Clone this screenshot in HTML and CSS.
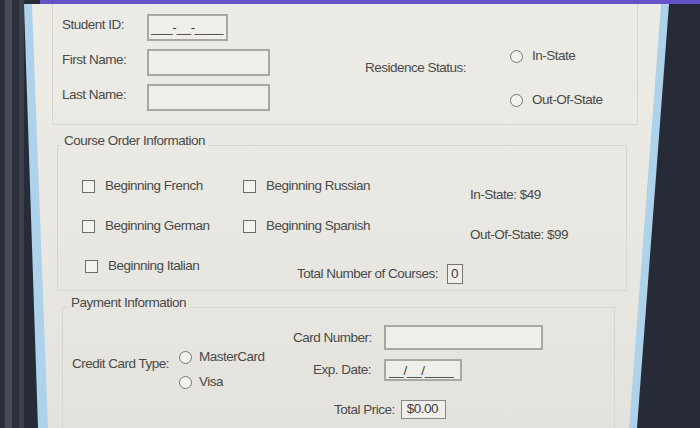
FILE: index.html
```html
<!DOCTYPE html>
<html>
<head>
<meta charset="utf-8">
<title>Course Order</title>
<link rel="stylesheet" href="styles.css">
</head>
<body>
<div class="topline"></div>
<div class="frame">
  <div class="window">
    <div class="group1">
      <div class="idgrid">
        <span class="lbl">Student ID:</span><span class="box box-id mask">___-__-____</span>
        <span class="lbl">First Name:</span><span class="box box-name"></span>
        <span class="lbl">Last Name:</span><span class="box box-name"></span>
      </div>
      <div class="residence">
        <span class="lbl res-label">Residence Status:</span>
        <div class="res-radios">
          <div class="radio"><span class="circle"></span><span>In-State</span></div>
          <div class="radio"><span class="circle"></span><span>Out-Of-State</span></div>
        </div>
      </div>
    </div>

    <fieldset class="group group2">
      <legend>Course Order Information</legend>
      <div class="courses">
        <div class="check"><span class="cbox"></span><span>Beginning French</span></div>
        <div class="check"><span class="cbox"></span><span>Beginning Russian</span></div>
        <div class="price">In-State: $49</div>
        <div class="check"><span class="cbox"></span><span>Beginning German</span></div>
        <div class="check"><span class="cbox"></span><span>Beginning Spanish</span></div>
        <div class="price">Out-Of-State: $99</div>
        <div class="check italian"><span class="cbox"></span><span>Beginning Italian</span></div>
        <div class="total-courses"><span>Total Number of Courses:</span><span class="box box-count">0</span></div>
      </div>
    </fieldset>

    <fieldset class="group group3">
      <legend>Payment Information</legend>
      <div class="pay">
        <div class="pay-left">
          <span class="lbl cc-label">Credit Card Type:</span>
          <div class="cc-radios">
            <div class="radio"><span class="circle"></span><span>MasterCard</span></div>
            <div class="radio"><span class="circle"></span><span>Visa</span></div>
          </div>
        </div>
        <div class="pay-right">
          <div class="card-grid">
            <span class="lbl rlbl">Card Number:</span><span class="box box-card"></span>
            <span class="lbl rlbl">Exp. Date:</span><span class="box box-exp mask">__/__/____</span>
          </div>
          <div class="total-row"><span>Total Price:</span><span class="box box-total">$0.00</span></div>
        </div>
      </div>
    </fieldset>
  </div>
</div>
</body>
</html>
```

FILE: styles.css
```css
html, body {
  margin: 0;
  padding: 0;
}
body {
  width: 700px;
  height: 428px;
  overflow: hidden;
  background: linear-gradient(90deg, #2a2f3c 0 5px, #464b57 5px 12px, #2c303c 12px 19px, #3c404b 19px 24px, #262b37 24px);
  font-family: "Liberation Sans", Arial, sans-serif;
  font-size: 13.5px;
  letter-spacing: -0.5px;
  color: #4a4a4a;
}
.topline {
  height: 4px;
  margin-left: 40px;
  background: #6352c8;
}
.frame {
  height: 424px;
  background: #aed2ea;
  clip-path: polygon(24px 0, 669px 0, 637px 424px, 38px 424px);
}
.window {
  height: 424px;
  overflow: hidden;
  background: linear-gradient(180deg, #ecebe6 0%, #e9e8e2 50%, #e4e2dc 100%);
  clip-path: polygon(32px 0, 661px 0, 629px 424px, 48px 424px);
}
.lbl, legend, .price, .radio, .check, .total-courses, .total-row {
  line-height: 16px;
  white-space: nowrap;
}

/* top group */
.group1 {
  box-sizing: border-box;
  margin-left: 52px;
  width: 586px;
  height: 121px;
  border: 1px solid #d8d6d0;
  border-top: none;
  padding: 10px 0 0 9px;
  display: flex;
  align-items: flex-start;
}
.idgrid {
  display: grid;
  grid-template-columns: 85px auto;
  grid-auto-rows: 27px;
  row-gap: 8px;
  align-items: center;
}
.idgrid .lbl { margin-bottom: 6px; }
.box {
  box-sizing: border-box;
  display: block;
  border: 2px solid #a9a7a1;
  background: #efeeea;
  color: #3e3e3e;
  line-height: 16px;
  white-space: nowrap;
  overflow: hidden;
}
.box-id { width: 81px; height: 27px; padding: 4px 0 0 2px; letter-spacing: -0.4px; }
.box-name { width: 123px; height: 27px; }
.residence {
  margin-left: 95px;
  display: flex;
  align-items: flex-start;
}
.res-label {
  width: 145px;
  margin-top: 46px;
}
.res-radios {
  margin-top: 32px;
  display: flex;
  flex-direction: column;
  gap: 24px;
}
.radio {
  display: flex;
  align-items: center;
  gap: 9px;
  height: 20px;
}
.circle {
  box-sizing: border-box;
  width: 13px;
  height: 13px;
  border-radius: 50%;
  border: 1.5px solid #7a7772;
  background: #f2f1ed;
}

/* fieldsets */
.group {
  box-sizing: border-box;
  border: 1px solid #d8d6d0;
  min-width: 0;
}
.group legend {
  padding: 0 3px 8px;
}
.group2 {
  margin: 8px 0 0 57px;
  width: 570px;
  padding: 19px 0 14px 24px;
}
.group2 legend { margin-left: -21px; }
.courses {
  display: grid;
  grid-template-columns: 161px 227px auto;
  grid-auto-rows: 20px;
  row-gap: 20px;
  align-items: center;
}
.check {
  display: flex;
  align-items: center;
  gap: 10px;
}
.italian { margin-left: 3px; }
.cbox {
  box-sizing: border-box;
  width: 13px;
  height: 13px;
  border: 1.5px solid #6f6d69;
  background: #f4f3ef;
}
.price {
  align-self: start;
  margin-top: 11px;
}
.total-courses {
  grid-column: 2 / 4;
  align-self: start;
  margin: 8px 0 0 54px;
  display: flex;
  align-items: center;
  gap: 9px;
}
.box-count {
  width: 16px;
  height: 20px;
  padding: 1px 0 0 3px;
  border-width: 1.5px;
  border-color: #77756f;
}

.group3 {
  margin: 4px 0 0 62px;
  width: 553px;
  height: 200px;
  padding: 0 0 0 9px;
}
.group3 legend { margin-left: -4px; }
.pay {
  display: flex;
  align-items: flex-start;
}
.pay-left {
  width: 221px;
  margin-top: 28px;
  display: flex;
  align-items: flex-start;
}
.cc-label {
  width: 107px;
  margin-top: 9px;
}
.cc-radios {
  display: flex;
  flex-direction: column;
  gap: 5px;
}
.cc-radios .radio { gap: 7px; }
.pay-right {
  margin-top: 6px;
  display: flex;
  flex-direction: column;
}
.card-grid {
  display: grid;
  grid-template-columns: 78px auto;
  grid-template-rows: 25px 22px;
  column-gap: 13px;
  row-gap: 9px;
  align-items: center;
}
.rlbl { text-align: right; }
.box-card { width: 159px; height: 25px; }
.box-exp { width: 78px; height: 22px; padding: 2px 0 0 3px; letter-spacing: -0.3px; }
.total-row {
  margin: 19px 0 0 41px;
  display: flex;
  align-items: center;
  gap: 6px;
}
.box-total {
  width: 45px;
  height: 19px;
  padding: 0 0 0 5px;
  line-height: 15px;
  border-width: 1.5px;
  border-color: #8a8882;
}
```
